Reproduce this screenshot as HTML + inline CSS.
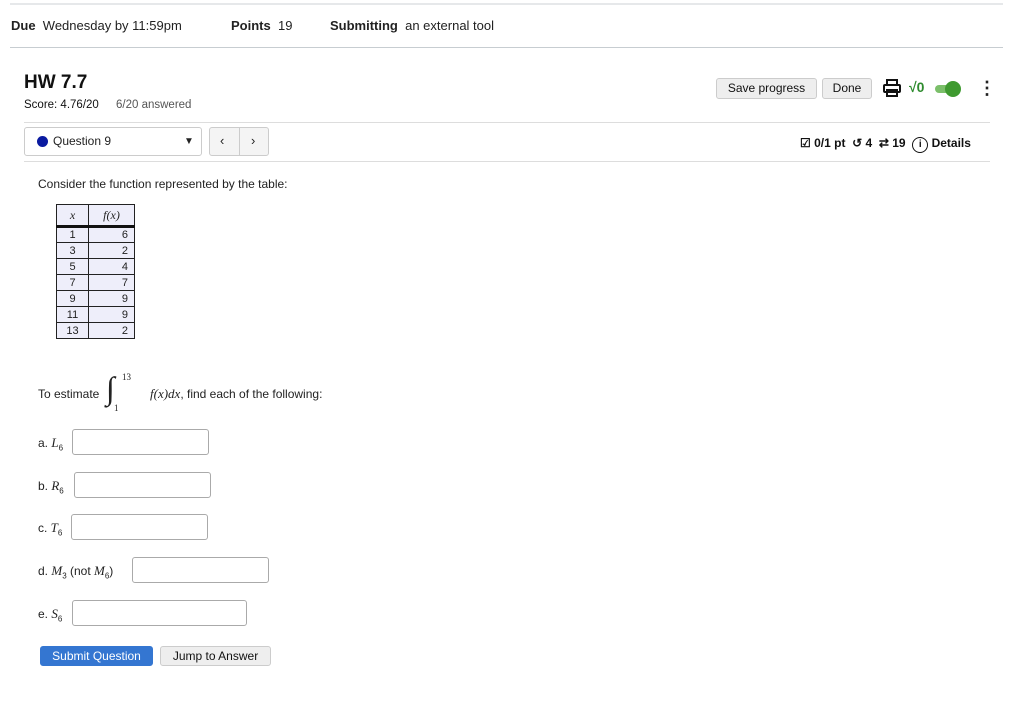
<!DOCTYPE html>
<html><head><meta charset="utf-8"><style>
*{margin:0;padding:0;box-sizing:border-box}
body{width:1024px;height:724px;background:#fff;font-family:"Liberation Sans",sans-serif;color:#222;position:relative;overflow:hidden}
.a{position:absolute;white-space:nowrap}
.hr{position:absolute;height:1px;background:#c7cdd1}
.btn{position:absolute;background:#eee;border:1px solid #ccc;border-radius:3px;font-size:12px;text-align:center;color:#111}
.inp{position:absolute;border:1px solid #aaa;border-radius:3px;height:26px;background:#fff}
.m{font-family:"Liberation Serif",serif;font-style:italic}
table{border-collapse:collapse;position:absolute;left:56px;top:204px;font-size:11px}
td{border:1px solid #222;background:#eeeefa;height:16px;padding:0 6px;text-align:right}
td:first-child{text-align:center}
th{border:1px solid #222;background:#eeeefa;height:22px;font-weight:normal;font-family:"Liberation Serif",serif;font-style:italic;font-size:12px;border-bottom:3px solid #111}
</style></head><body>
<div class="hr" style="left:10px;top:3px;width:993px;height:2px;background:#e6e8ea"></div>
<div class="a" style="left:11px;top:18px;font-size:13px"><b>Due</b>&nbsp; Wednesday by 11:59pm</div>
<div class="a" style="left:231px;top:18px;font-size:13px"><b>Points</b>&nbsp; 19</div>
<div class="a" style="left:330px;top:18px;font-size:13px"><b>Submitting</b>&nbsp; an external tool</div>
<div class="hr" style="left:10px;top:47px;width:993px"></div>
<div class="a" style="left:24px;top:72px;font-size:19px;font-weight:bold;color:#111">HW 7.7</div>
<div class="a" style="left:24px;top:99px;font-size:11.5px;color:#111">Score: 4.76/20 <span style="color:#555;margin-left:14px">6/20 answered</span></div>
<div class="btn" style="left:716px;top:78px;width:101px;height:21px;line-height:19px">Save progress</div>
<div class="btn" style="left:822px;top:78px;width:50px;height:21px;line-height:19px">Done</div>
<svg class="a" style="left:882px;top:78px" width="20" height="20" viewBox="0 0 20 20" fill="none" stroke="#111" stroke-width="2"><rect x="5" y="2" width="10" height="5"/><rect x="2" y="7" width="16" height="7" rx="1"/><rect x="5" y="12" width="10" height="6"/></svg>
<div class="a" style="left:909px;top:79px;font-size:14px;color:#2e8b2e;font-weight:bold">√0</div>
<div class="a" style="left:935px;top:85px;width:22px;height:8px;border-radius:4px;background:#7bbf6a"></div>
<div class="a" style="left:945px;top:81px;width:16px;height:16px;border-radius:50%;background:#3f9a30"></div>
<div class="a" style="left:978px;top:78px;font-size:18px;font-weight:bold;line-height:20px">⋮</div>
<div class="hr" style="left:24px;top:122px;width:966px;background:#ddd"></div>
<div class="a" style="left:24px;top:127px;width:178px;height:29px;border:1px solid #ccc;border-radius:3px"></div>
<div class="a" style="left:37px;top:136px;width:11px;height:11px;border-radius:50%;background:#0a1aa0"></div>
<div class="a" style="left:53px;top:134px;font-size:12px">Question 9</div>
<div class="a" style="left:184px;top:136px;font-size:10px">▼</div>
<div class="a" style="left:209px;top:127px;width:60px;height:29px;border:1px solid #ccc;border-radius:3px;background:#f4f4f4"></div>
<div class="a" style="left:239px;top:128px;width:1px;height:27px;background:#ccc"></div>
<div class="a" style="left:220px;top:133px;font-size:13px">‹</div>
<div class="a" style="left:251px;top:133px;font-size:13px">›</div>
<div class="hr" style="left:24px;top:161px;width:966px;background:#ddd"></div>
<div class="a" style="left:800px;top:136px;font-size:12px;color:#111;font-weight:bold">☑ 0/1 pt &nbsp;↺ 4 &nbsp;⇄ 19 &nbsp;<span style="display:inline-block;width:16px;height:16px;border:1.5px solid #111;border-radius:50%;text-align:center;font-size:10px;line-height:13px;font-weight:bold">i</span> Details</div>
<div class="a" style="left:38px;top:177px;font-size:12px">Consider the function represented by the table:</div>
<table><tr><th style="width:32px">x</th><th style="width:46px">f(x)</th></tr>
<tr><td>1</td><td>6</td></tr><tr><td>3</td><td>2</td></tr><tr><td>5</td><td>4</td></tr><tr><td>7</td><td>7</td></tr><tr><td>9</td><td>9</td></tr><tr><td>11</td><td>9</td></tr><tr><td>13</td><td>2</td></tr></table>
<div class="a" style="left:38px;top:387px;font-size:12px">To estimate</div>
<div class="a m" style="left:106px;top:370px;font-size:32px;font-style:normal">∫</div>
<div class="a" style="left:122px;top:372px;font-size:9px;font-family:'Liberation Serif',serif">13</div>
<div class="a" style="left:114px;top:403px;font-size:9px;font-family:'Liberation Serif',serif">1</div>
<div class="a" style="left:150px;top:386px;font-size:12px"><span class="m" style="font-size:13px">f(x)dx</span>, find each of the following:</div>
<div class="a" style="left:38px;top:435px;font-size:12px">a. <span class="m" style="font-size:13px">L</span><sub style="font-size:8px">6</sub></div>
<div class="inp" style="left:72px;top:429px;width:137px"></div>
<div class="a" style="left:38px;top:478px;font-size:12px">b. <span class="m" style="font-size:13px">R</span><sub style="font-size:8px">6</sub></div>
<div class="inp" style="left:74px;top:472px;width:137px"></div>
<div class="a" style="left:38px;top:520px;font-size:12px">c. <span class="m" style="font-size:13px">T</span><sub style="font-size:8px">6</sub></div>
<div class="inp" style="left:71px;top:514px;width:137px"></div>
<div class="a" style="left:38px;top:563px;font-size:12px">d. <span class="m" style="font-size:13px">M</span><sub style="font-size:8px">3</sub> (not <span class="m" style="font-size:13px">M</span><sub style="font-size:8px">6</sub>)</div>
<div class="inp" style="left:132px;top:557px;width:137px"></div>
<div class="a" style="left:38px;top:606px;font-size:12px">e. <span class="m" style="font-size:13px">S</span><sub style="font-size:8px">6</sub></div>
<div class="inp" style="left:72px;top:600px;width:175px"></div>
<div class="btn" style="left:40px;top:646px;width:113px;height:20px;line-height:18px;background:#3476d1;border-color:#3476d1;color:#fff">Submit Question</div>
<div class="btn" style="left:160px;top:646px;width:111px;height:20px;line-height:18px">Jump to Answer</div>
</body></html>
